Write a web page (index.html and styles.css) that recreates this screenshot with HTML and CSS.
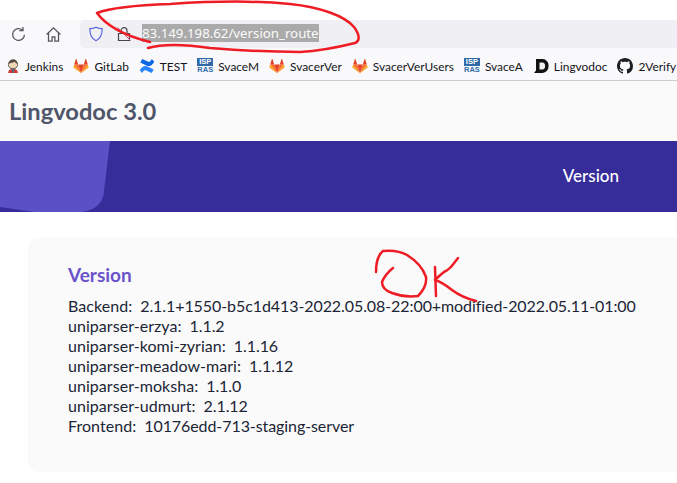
FILE: index.html
```html
<!DOCTYPE html>
<html lang="en">
<head>
<meta charset="utf-8">
<title>Lingvodoc 3.0</title>
<link rel="stylesheet" href="styles.css">
</head>
<body>
<svg class="defs" width="0" height="0" aria-hidden="true">
  <symbol id="gitlab" viewBox="0 0 16 16">
    <path fill="#e24329" d="M8 15.200 5.200 6.400h5.600z"/>
    <path fill="#fc6d26" d="M8 15.200 5.200 6.400H1.200zM8 15.200l2.800-8.800h4z"/>
    <path fill="#fca326" d="M1.200 6.400.4 9c-.1.300 0 .6.300.8L8 15.200zM14.800 6.400l.8 2.600c.1.300 0 .6-.3.8L8 15.200z"/>
    <path fill="#e24329" d="M1.200 6.400h4L3.500 1.100c-.1-.3-.5-.3-.6 0zM14.800 6.400h-4l1.700-5.300c.1-.3.5-.3.6 0z"/>
  </symbol>
</svg>

<div class="top-gap"></div>

<div class="toolbar">
  <div class="nav-buttons">
    <svg class="nav-icon" viewBox="0 0 16 16"><path d="M13.600 8.200A5.600 5.600 0 1 1 11.700 3.800M12.200 1v3.400H8.800"/></svg>
    <svg class="nav-icon" viewBox="0 0 16 16"><path d="M1.500 8 8 1.700 14.500 8M3.300 6.500v7.800h3.400v-4h2.600v4h3.400V6.500"/></svg>
  </div>
  <div class="url-bar">
    <svg class="shield" viewBox="0 0 16 16"><path d="M8 1.200c2 1 4 1.500 6.200 1.500 0 5.500-1.600 9.800-6.200 12.100C3.400 12.500 1.800 8.200 1.800 2.700 4 2.700 6 2.200 8 1.200z"/></svg>
    <svg class="lock" viewBox="0 0 16 16">
      <path class="lock-body" d="M2.500 7.500h11v7h-11zM5 7.500V4.700a3 3 0 0 1 6 0v2.800"/>
      <path class="lock-slash" d="M1.500 1.500 14.500 14.500"/>
    </svg>
    <span class="url-text">83.149.198.62/version_route</span>
  </div>
</div>

<nav class="bookmarks">
  <a class="bookmark">
    <svg class="bm-icon bm-icon-narrow" viewBox="0 0 16 16">
      <path fill="#d33833" d="M2.500 16c.2-2.800 1.500-4.500 5.500-4.500s5.300 1.700 5.500 4.500z"/>
      <path fill="#49728b" d="M6.500 11.500h3l-.8 4.500H7.300z"/>
      <circle cx="8" cy="6.300" r="5.300" fill="#f0d6b7" stroke="#3a3030" stroke-width=".8"/>
      <path fill="#5a4a42" d="M3 5.500C3.500 2 6 .6 8.200.6c2.800 0 4.700 1.800 4.800 4.700-1.800-.3-2.300-1.800-3.600-2.300C8 4.500 5.500 4 3 5.500z"/>
      <path fill="#6d6b6d" d="M5.500 9.500c1.500 1.500 3.200 1.500 5 0-.2 2-1 2.900-2.500 2.900S5.800 11.500 5.500 9.500z"/>
    </svg>
    <span>Jenkins</span>
  </a>
  <a class="bookmark"><svg class="bm-icon"><use href="#gitlab"/></svg><span>GitLab</span></a>
  <a class="bookmark">
    <svg class="bm-icon" viewBox="0 0 16 16">
      <path fill="#2684ff" d="M.7 12.300c2.800-4.600 5.500-5 8-3.800l6 2.900-2 3.700-5.500-2.600c-1.300-.6-2.200-.4-3.200 1.300l-.8 1.200z"/>
      <path fill="#0b66e4" d="M15.300 3.700c-2.800 4.600-5.500 5-8 3.800l-6-2.900 2-3.700 5.500 2.600c1.300.6 2.200.4 3.200-1.300l.8-1.200z"/>
    </svg>
    <span>TEST</span>
  </a>
  <a class="bookmark">
    <span class="isp-icon"><span class="isp-top">ISP</span><span class="isp-bottom">RAS</span></span>
    <span>SvaceM</span>
  </a>
  <a class="bookmark"><svg class="bm-icon"><use href="#gitlab"/></svg><span>SvacerVer</span></a>
  <a class="bookmark"><svg class="bm-icon"><use href="#gitlab"/></svg><span>SvacerVerUsers</span></a>
  <a class="bookmark">
    <span class="isp-icon"><span class="isp-top">ISP</span><span class="isp-bottom">RAS</span></span>
    <span>SvaceA</span>
  </a>
  <a class="bookmark">
    <svg class="bm-icon" viewBox="0 0 16 16">
      <path fill="#111" d="M3 1h6.500a6.200 6.200 0 0 1 6 7 6.500 6.500 0 0 1-6 7H1l2-2.500z"/>
      <path fill="#eee" d="M6.500 4.500h2.800c2 0 2.800 1.500 2.800 3.500s-.8 3.500-2.800 3.500H6.500z"/>
    </svg>
    <span>Lingvodoc</span>
  </a>
  <a class="bookmark">
    <svg class="bm-icon" viewBox="0 0 16 16"><path fill="#1b1f23" d="M8 0C3.580 0 0 3.580 0 8c0 3.540 2.290 6.530 5.470 7.590.4.070.55-.17.55-.38 0-.19-.01-.82-.01-1.490-2.010.37-2.530-.49-2.690-.94-.09-.23-.48-.94-.82-1.130-.28-.15-.68-.52-.01-.53.630-.01 1.080.58 1.230.82.720 1.210 1.870.87 2.330.66.070-.52.280-.87.510-1.070-1.780-.2-3.640-.89-3.640-3.950 0-.87.310-1.590.820-2.150-.08-.2-.36-1.020.08-2.120 0 0 .67-.21 2.200.82.640-.18 1.320-.27 2-.27s1.360.09 2 .27c1.530-1.040 2.200-.82 2.200-.82.440 1.100.160 1.920.08 2.120.51.560.82 1.270.82 2.150 0 3.070-1.870 3.750-3.650 3.950.29.250.54.730.54 1.480 0 1.070-.01 1.930-.01 2.200 0 .21.150.46.550.38A8.010 8.010 0 0 0 16 8c0-4.420-3.580-8-8-8z"/></svg>
    <span>2Verify-</span>
  </a>
</nav>

<header class="app-header"><h1 class="app-title">Lingvodoc 3.0</h1></header>

<section class="banner">
  <svg class="banner-shape" viewBox="0 0 110 71" aria-hidden="true"><path d="M0 0H110L103.500 54C101 64 94 69 82 71H35L0 66z"/></svg>
  <span class="banner-title">Version</span>
</section>

<main class="content">
  <article class="card">
    <h2 class="card-title">Version</h2>
    <ul class="versions">
      <li><span class="name">Backend:</span>2.1.1+1550-b5c1d413-2022.05.08-22:00+modified-2022.05.11-01:00</li>
      <li><span class="name">uniparser-erzya:</span>1.1.2</li>
      <li><span class="name">uniparser-komi-zyrian:</span>1.1.16</li>
      <li><span class="name">uniparser-meadow-mari:</span>1.1.12</li>
      <li><span class="name">uniparser-moksha:</span>1.1.0</li>
      <li><span class="name">uniparser-udmurt:</span>2.1.12</li>
      <li><span class="name">Frontend:</span>10176edd-713-staging-server</li>
    </ul>
  </article>
</main>

<svg class="scribble" viewBox="0 0 677 483" aria-hidden="true">
  <path d="M150 42C130 37 108 28 97 13C110 8 140 5 170 4C215 1 260 1 290 4C320 7 345 16 354 27C360 35 360 41 355 43C335 48 320 51 300 52C265 52 235 50 210 48C190 45 165 43 148 48"/>
  <path d="M376 272C376 262 378 255 383 251C392 250 400 251 407 255C415 260 423 268 426 277C427 285 423 291 418 296C410 297 400 296 392 293C386 291 382 287 382 282C384 277 388 272 393 268"/>
  <path d="M435 267L436 296M458 258C452 266 449 270 444 272C440 275 437 278 435 280C442 282 447 286 452 290C460 296 468 299 476 301"/>
</svg>
</body>
</html>
```

FILE: styles.css
```css
* { box-sizing: border-box; }

html, body {
  margin: 0;
  height: 483px;
  overflow: hidden;
  background: #fff;
}

body {
  position: relative;
  font-family: "Lato", "Liberation Sans", sans-serif;
}

.defs { position: absolute; }

.top-gap { height: 20px; }

.toolbar {
  display: flex;
  height: 28px;
  background: #f9f9fb;
}

.nav-buttons {
  display: flex;
  align-items: center;
  gap: 18px;
  width: 80px;
  padding-left: 10px;
}

.nav-icon {
  width: 17px;
  height: 17px;
  fill: none;
  stroke: #55555b;
  stroke-width: 1.200;
}

.url-bar {
  flex: 1;
  display: flex;
  align-items: center;
  padding-left: 8px;
  background: #f0f0f4;
  border-radius: 5px 0 0 5px;
}

.shield {
  width: 16px;
  height: 16px;
  fill: none;
  stroke: #5a69e6;
  stroke-width: 1.200;
}

.lock {
  width: 16px;
  height: 16px;
  margin-left: 12px;
  fill: none;
}
.lock-body { stroke: #45454b; stroke-width: 1.200; }
.lock-slash { stroke: #e8417d; stroke-width: 1; }

.url-text {
  margin-left: 10px;
  height: 18px;
  margin-top: -2px;
  background: #aaa;
  color: #fbfbfb;
  font-family: "Noto Sans", sans-serif;
  font-size: 13.250px;
  line-height: 18px;
}

.bookmarks {
  display: flex;
  align-items: center;
  gap: 10px;
  height: 33px;
  padding: 4px 0 0 6px;
  background: #f9f9fb;
  border-bottom: 1px solid #ccc;
  overflow: hidden;
  white-space: nowrap;
}

.bookmark {
  flex: none;
  display: flex;
  align-items: center;
  gap: 5px;
  color: #15141a;
  font-family: "Lato", sans-serif;
  font-size: 11.900px;
}

.bm-icon {
  flex: none;
  width: 16px;
  height: 16px;
}

.bm-icon-narrow { width: 14px; }

.isp-icon {
  flex: none;
  display: flex;
  flex-direction: column;
  width: 16px;
  height: 16px;
  font-family: "Liberation Sans", sans-serif;
  font-size: 7.500px;
  font-weight: 700;
  line-height: 8px;
  text-align: center;
}
.isp-top { background: #2f6aa8; color: #fff; }
.isp-bottom { color: #2f6aa8; }

.app-header {
  display: flex;
  align-items: center;
  height: 60px;
  padding-left: 9px;
  background: #fafafa;
}

.app-title {
  margin: 0;
  font-size: 23.700px;
  font-weight: 700;
  color: #50566a;
}

.banner {
  position: relative;
  display: flex;
  align-items: center;
  justify-content: flex-end;
  height: 71px;
  padding: 0 58px 2px 0;
  background: #372d9a;
}

.banner-shape {
  position: absolute;
  left: 0;
  top: 0;
  width: 110px;
  height: 71px;
  fill: #5b51c6;
}

.banner-title {
  color: #fff;
  font-size: 17px;
  font-weight: 500;
}

.content { padding: 26px 0 0 28px; }

.card {
  height: 234px;
  padding: 27px 0 0 40px;
  background: #fafafa;
  border-radius: 10px 0 0 10px;
}

.card-title {
  margin: 0 0 11px;
  color: #6a52cb;
  font-size: 19px;
  font-weight: 700;
  line-height: 20px;
}

.versions {
  margin: 0;
  padding: 0;
  list-style: none;
  color: #1b2536;
  font-size: 16px;
  letter-spacing: -.08px;
  line-height: 20px;
  white-space: nowrap;
}

.name {
  margin-right: 8px;
  letter-spacing: .05px;
}

.scribble {
  position: absolute;
  left: 0;
  top: 0;
  width: 677px;
  height: 483px;
  fill: none;
  stroke: #ee1c25;
  stroke-width: 2.500;
  stroke-linecap: round;
  stroke-linejoin: round;
  pointer-events: none;
}
```
